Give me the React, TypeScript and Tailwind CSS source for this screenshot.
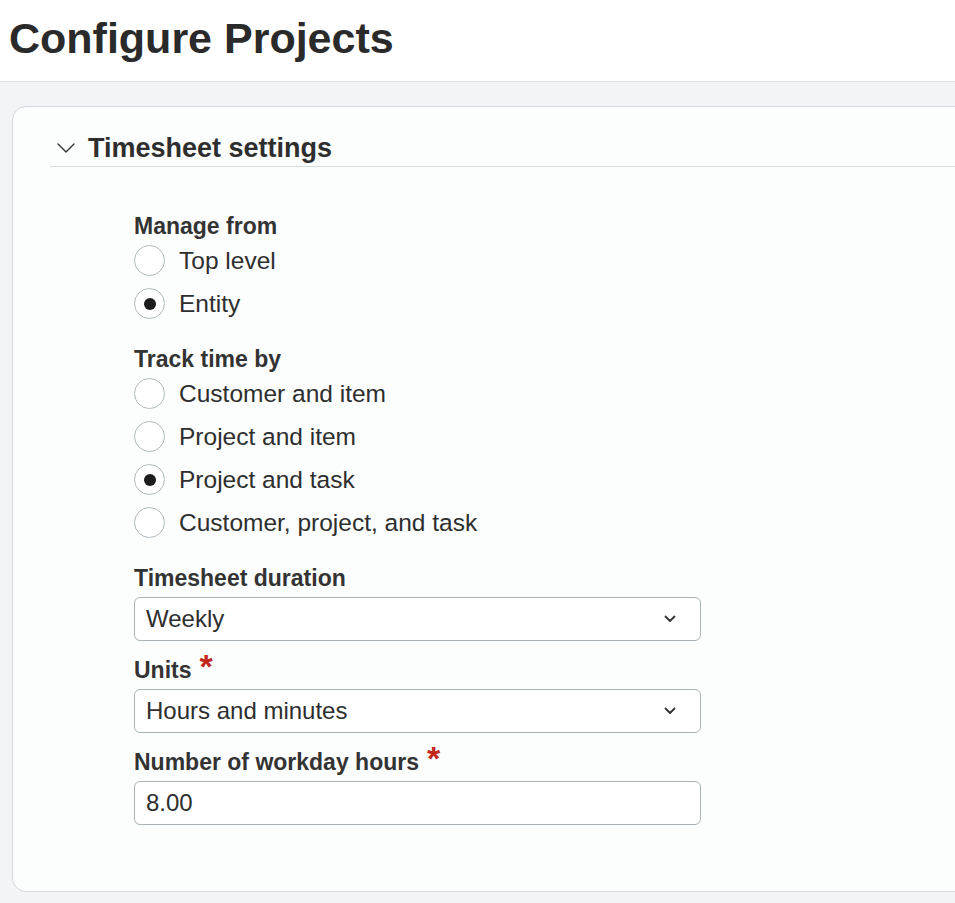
const manageFrom = [
  { label: "Top level", checked: false },
  { label: "Entity", checked: true },
];

const trackTimeBy = [
  { label: "Customer and item", checked: false },
  { label: "Project and item", checked: false },
  { label: "Project and task", checked: true },
  { label: "Customer, project, and task", checked: false },
];

function Radio({ label, checked }: { label: string; checked: boolean }) {
  return (
    <div className="flex h-[43px] items-center">
      <span className="flex h-[31px] w-[31px] items-center justify-center rounded-full border-[1.5px] border-[#b0babd] bg-white">
        {checked && <span className="h-[12px] w-[12px] rounded-full bg-[#1c1c1c]" />}
      </span>
      <span className="ml-[14px] text-[24.5px] leading-[26px]">{label}</span>
    </div>
  );
}

function Label({ text, required }: { text: string; required?: boolean }) {
  return (
    <div className="text-[23px] font-bold leading-[26px] text-[#333]">
      {text}
      {required && (
        <span className="ml-[8px] align-baseline text-[34px] font-bold leading-[0] text-[#c0261b]">*</span>
      )}
    </div>
  );
}

function Chevron({ className }: { className?: string }) {
  return (
    <svg className={className} viewBox="0 0 12 8" fill="none">
      <path d="M1.5 1.5 L6 6 L10.5 1.5" stroke="#333" strokeWidth="1.8" strokeLinecap="round" strokeLinejoin="round" />
    </svg>
  );
}

function SelectBox({ value }: { value: string }) {
  return (
    <div className="mt-[6px] flex h-[44px] w-[567px] items-center justify-between rounded-[6px] border-[1.5px] border-[#a9b3b6] bg-white pl-[11px] pr-[24px]">
      <span className="text-[24px] leading-[26px]">{value}</span>
      <Chevron className="h-[8px] w-[12px]" />
    </div>
  );
}

export default function App() {
  return (
    <div className="min-h-screen w-full overflow-hidden bg-[#f3f4f5] font-['Liberation_Sans',Arial,sans-serif] text-[#2e2e2e]">
      {/* Page header */}
      <div className="h-[82px] border-b border-[#dde1e4] bg-white pl-[9px] pt-[14px]">
        <h1 className="text-[43px] font-bold leading-[48px] text-[#2a2a2a]">Configure Projects</h1>
      </div>

      <div className="pl-[12px] pt-[24px] pb-[11px]">
        <div className="w-[990px] rounded-[14px] border-[1.5px] border-[#d3d9dc] bg-[#fcfdfd] pb-[66px] pl-[37px] pt-[26px]">
          {/* Section heading */}
          <div className="flex items-center border-b-[1.5px] border-[#d5dbde] pb-[3px]">
            <svg className="ml-[7px] h-[10px] w-[18px]" viewBox="0 0 18 10" fill="none">
              <path d="M1 1 L9 9 L17 1" stroke="#333" strokeWidth="1.4" strokeLinecap="round" strokeLinejoin="round" />
            </svg>
            <h2 className="ml-[13px] text-[27px] font-bold leading-[30px]">Timesheet settings</h2>
          </div>

          <div className="ml-[84px] mt-[46px]">
            <Label text="Manage from" />
            {manageFrom.map((o) => (
              <Radio key={o.label} label={o.label} checked={o.checked} />
            ))}

            <div className="mt-[21px]">
              <Label text="Track time by" />
              {trackTimeBy.map((o) => (
                <Radio key={o.label} label={o.label} checked={o.checked} />
              ))}
            </div>

            <div className="mt-[21px]">
              <Label text="Timesheet duration" />
              <SelectBox value="Weekly" />
            </div>

            <div className="mt-[16px]">
              <Label text="Units" required />
              <SelectBox value="Hours and minutes" />
            </div>

            <div className="mt-[16px]">
              <Label text="Number of workday hours" required />
              <div className="mt-[6px] flex h-[44px] w-[567px] items-center rounded-[6px] border-[1.5px] border-[#a9b3b6] bg-white pl-[11px]">
                <span className="text-[24px] leading-[26px]">8.00</span>
              </div>
            </div>
          </div>
        </div>
      </div>
    </div>
  );
}
